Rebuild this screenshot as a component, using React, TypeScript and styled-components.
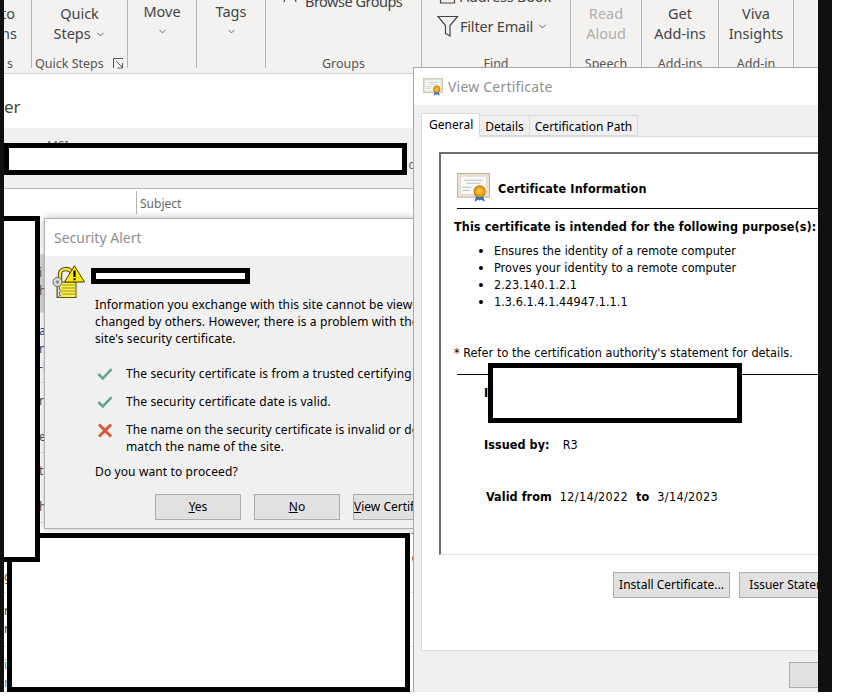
import styled, { createGlobalStyle } from "styled-components";
import { ChevronDown } from "lucide-react";

const GlobalStyle = createGlobalStyle`
  html, body {
    margin: 0;
    padding: 0;
    background: #ffffff;
  }
  * { box-sizing: border-box; }
`;

const UI_FONT = `"Noto Sans", "Open Sans", sans-serif`;
const CERT_FONT = `"DejaVu Sans Condensed", "DejaVu Sans", sans-serif`;

const ribbonGroups = [
  { width: 28, label: "s", labelAlign: "left" },
  { width: 96, label: "Quick Steps", labelAlign: "left" },
  { width: 69, label: "" },
  { width: 69, label: "" },
  { width: 156, label: "Groups" },
  { width: 149, label: "Find" },
  { width: 71, label: "Speech" },
  { width: 77, label: "Add-ins" },
  { width: 75, label: "Add-in" },
];

const listRows = [
  { height: 39, text: "" },
  { height: 58, text: "i\nh", shade: true, indent: 39 },
  { height: 70, text: "ai\nng\n-F", color: "#2b4f8f", indent: 39 },
  { height: 70, text: "r\n\ne", indent: 39 },
  { height: 70, text: "t\n\nh", indent: 39 },
  { height: 70, text: "\n\ng", side: "T\ne", indent: 4, color: "#8a3a3a" },
  { height: 54, text: "r\nr", indent: 4, color: "#7a2a4a" },
  { height: 45, text: "i\nr", indent: 4, color: "#1a9ac0" },
];

export default function App() {
  return (
    <>
      <GlobalStyle />
      <Desktop>
        <Ribbon>
          {ribbonGroups.map((group, i) => (
            <RibbonGroup key={i} $width={group.width}>
              <RibbonContent>
                {i === 0 && (
                  <CutButton>
                    to
                    <br />
                    ns
                  </CutButton>
                )}
                {i === 1 && (
                  <LargeButton>
                    Quick
                    <br />
                    Steps <SmallChevron size={11} />
                  </LargeButton>
                )}
                {i === 2 && (
                  <StackedButton>
                    Move
                    <ChevronDown size={11} strokeWidth={1.6} />
                  </StackedButton>
                )}
                {i === 3 && (
                  <StackedButton>
                    Tags
                    <ChevronDown size={11} strokeWidth={1.6} />
                  </StackedButton>
                )}
                {i === 4 && (
                  <BrowseRow>
                    <PersonIcon />
                    Browse Groups
                  </BrowseRow>
                )}
                {i === 5 && (
                  <FindColumn>
                    <FindRow>
                      <BookIcon />
                      Address Book
                    </FindRow>
                    <FindRow>
                      <FilterIcon />
                      Filter Email <FindChevron size={11} />
                    </FindRow>
                  </FindColumn>
                )}
                {i === 6 && (
                  <LargeButton $muted>
                    Read
                    <br />
                    Aloud
                  </LargeButton>
                )}
                {i === 7 && (
                  <LargeButton>
                    Get
                    <br />
                    Add-ins
                  </LargeButton>
                )}
                {i === 8 && (
                  <LargeButton>
                    Viva
                    <br />
                    Insights
                  </LargeButton>
                )}
              </RibbonContent>
              <GroupLabel $align={group.labelAlign}>
                {group.label}
                {i === 1 && <LauncherIcon />}
              </GroupLabel>
            </RibbonGroup>
          ))}
        </Ribbon>

        <FolderTitle>er</FolderTitle>
        <FilterBand>
          <BandSender>MSI</BandSender>
          <BandEnd>ci</BandEnd>
        </FilterBand>
        <ColumnHeader>
          <SubjectCell>Subject</SubjectCell>
        </ColumnHeader>
        <MailList>
          {listRows.map((row, i) => (
            <MailRow key={i} $height={row.height} $shade={row.shade} $color={row.color} $indent={row.indent ?? 39}>
              <span>{row.text}</span>
              {row.side && <RowSide>{row.side}</RowSide>}
            </MailRow>
          ))}
        </MailList>

        <SecurityWindow>
          <WindowTitle>Security Alert</WindowTitle>
          <AlertBody>
            <AlertHead>
              <LockWarningIcon />
              <InlineRedaction />
            </AlertHead>
            <AlertText>
              Information you exchange with this site cannot be viewed or
              <br />
              changed by others. However, there is a problem with the
              <br />
              site's security certificate.
            </AlertText>
            <CheckList>
              <CheckItem>
                <CheckIcon />
                <span>The security certificate is from a trusted certifying authority.</span>
              </CheckItem>
              <CheckItem>
                <CheckIcon />
                <span>The security certificate date is valid.</span>
              </CheckItem>
              <CheckItem>
                <CrossIcon />
                <span>
                  The name on the security certificate is invalid or does not
                  <br />
                  match the name of the site.
                </span>
              </CheckItem>
            </CheckList>
            <Question>Do you want to proceed?</Question>
            <AlertButtons>
              <DialogButton $width={86}>
                <u>Y</u>es
              </DialogButton>
              <DialogButton $width={86}>
                <u>N</u>o
              </DialogButton>
              <DialogButton $width={86}>
                <u>V</u>iew Certificate
              </DialogButton>
            </AlertButtons>
          </AlertBody>
        </SecurityWindow>

        <CertWindow>
          <CertTitle>
            <CertIcon $size={20} />
            View Certificate
          </CertTitle>
          <CertBody>
            <Tabs>
              <Tab $active>General</Tab>
              <Tab>Details</Tab>
              <Tab>Certification Path</Tab>
            </Tabs>
            <TabPanel>
              <InfoBox>
                <InfoHead>
                  <CertIcon $size={33} />
                  <InfoHeading>Certificate Information</InfoHeading>
                </InfoHead>
                <PurposeHeading>This certificate is intended for the following purpose(s):</PurposeHeading>
                <Purposes>
                  <li>Ensures the identity of a remote computer</li>
                  <li>Proves your identity to a remote computer</li>
                  <li>2.23.140.1.2.1</li>
                  <li>1.3.6.1.4.1.44947.1.1.1</li>
                </Purposes>
                <ReferNote>* Refer to the certification authority's statement for details.</ReferNote>
                <InfoRule />
                <IssuedTo>Issued to:</IssuedTo>
                <IssuedBy>
                  <b>Issued by:</b>
                  <span>R3</span>
                </IssuedBy>
                <ValidRow>
                  <b>Valid from</b>
                  <span>12/14/2022</span>
                  <b>to</b>
                  <span>3/14/2023</span>
                </ValidRow>
              </InfoBox>
              <PanelButtons>
                <DialogButton $width={117}>Install Certificate...</DialogButton>
                <DialogButton $width={117}>Issuer Statement</DialogButton>
              </PanelButtons>
            </TabPanel>
            <CertFooter>
              <DialogButton $width={86} />
            </CertFooter>
          </CertBody>
        </CertWindow>

        <Redaction $x={4} $y={143} $w={403} $h={32} />
        <Redaction $x={7} $y={533} $w={403} $h={159} />
        <Redaction $x={-5} $y={216} $w={45} $h={346} />
        <Redaction $x={488} $y={363} $w={254} $h={60} />
        <EdgeBar $x={0} $w={4} />
        <EdgeBar $x={818} $w={14} />
      </Desktop>
    </>
  );
}

function PersonIcon() {
  return (
    <svg width="14" height="16" viewBox="0 0 14 16" fill="none" stroke="#444" strokeWidth="1.2">
      <circle cx="7" cy="2" r="4" />
      <path d="M1 11c.6-3.4 2.6-5 6-5s5.400 1.600 6 5" />
    </svg>
  );
}

function BookIcon() {
  return (
    <BookSvg width="17" height="18" viewBox="0 0 17 18" fill="none" stroke="#444" strokeWidth="1.2">
      <path d="M1.500 1h14v15h-14z" />
      <path d="M1.500 12.500h14M1.500 9.500h14" />
    </BookSvg>
  );
}

function FilterIcon() {
  return (
    <svg width="22" height="22" viewBox="0 0 22 22" fill="none" stroke="#444" strokeWidth="1.2">
      <path d="M1 1.500h19.500l-7.500 9v10.500l-4.500-2.500v-8z" />
    </svg>
  );
}

function LauncherIcon() {
  return (
    <LauncherSvg width="11" height="11" viewBox="0 0 11 11" fill="none" stroke="#555" strokeWidth="1">
      <path d="M.5 10V.5H10M3 3l6 6M9.500 5v5h-5" />
    </LauncherSvg>
  );
}

function LockWarningIcon() {
  return (
    <svg width="34" height="34" viewBox="0 0 34 34">
      <path d="M8 18V9c0-6 11-7 12 0v9" fill="none" stroke="#5f5500" strokeWidth="4.500" />
      <path d="M8 18V9c0-6 11-7 12 0v9" fill="none" stroke="#f6e64a" strokeWidth="2.200" />
      <rect x="5" y="17" width="19" height="15.500" fill="#f9ec5a" stroke="#5c5200" />
      <path d="M10 20h13M10 23h13M10 26h13M10 29h13" stroke="#a89600" strokeWidth="1" />
      <path d="M22.500 0.800 32.500 17H12.500z" fill="#ffec00" stroke="#3f3a00" strokeLinejoin="round" />
      <path d="M22.500 5.500v6.500M22.500 13.300v2" stroke="#000" strokeWidth="2.200" />
      <path d="M6.500 20v10.500l2 1.500M6.500 26h3" fill="none" stroke="#666" strokeWidth="3" />
      <path d="M6.500 20v10.500l2 1.500M6.500 26h3" fill="none" stroke="#d8d8d8" strokeWidth="1.400" />
      <circle cx="5.500" cy="17" r="4.500" fill="#dcdcdc" stroke="#666" />
      <circle cx="5.500" cy="17" r="1.400" fill="#777" />
    </svg>
  );
}

function CheckIcon() {
  return (
    <MarkSvg width="16" height="14" viewBox="0 0 18 14" fill="none" stroke="#5fa58f" strokeWidth="2.800">
      <path d="M1.500 7l5 5L16.500 1.500" />
    </MarkSvg>
  );
}

function CrossIcon() {
  return (
    <MarkSvg width="16" height="15" viewBox="0 0 16 15" fill="none" stroke="#d9583b" strokeWidth="3">
      <path d="M2 1.500l12 12M14 1.500l-12 12" />
    </MarkSvg>
  );
}

function CertIcon({ $size }: { $size: number }) {
  return (
    <svg width={$size} height={$size * 0.9} viewBox="0 0 32 29">
      <rect x="0.500" y="0.500" width="31" height="23" fill="#efe9dc" stroke="#b9ae99" />
      <rect x="3" y="3" width="26" height="18" fill="#fbfaf6" stroke="#d9d2c2" />
      <path d="M7 7h18M9 10h14M5 14h9M5 17h7" stroke="#b8c0cc" />
      <path d="M19 21l-2 7 4-2 1 1V21zM25 21l2 7-4-2-1 1V21z" fill="#2a6fd0" />
      <circle cx="22" cy="18" r="5.500" fill="#e8a317" stroke="#b97c0c" />
      <circle cx="22" cy="18" r="2.500" fill="#f4c24d" />
    </svg>
  );
}

const Desktop = styled.div`
  position: relative;
  width: 851px;
  height: 692px;
  overflow: hidden;
  background: #ffffff;
  font-family: ${UI_FONT};
  color: #000000;
`;

const Ribbon = styled.div`
  display: flex;
  height: 74px;
  padding: 0 0 5px 4px;
  width: 818px;
  background: #f3f2f1;
  border-bottom: 1px solid #d2d0ce;
`;

const RibbonGroup = styled.div<{ $width: number }>`
  display: flex;
  flex-direction: column;
  width: ${(p) => p.$width}px;
  flex: none;
  border-right: 1px solid #b8b6b4;
`;

const RibbonContent = styled.div`
  flex: 1;
  min-height: 0;
  display: flex;
  justify-content: center;
  font-size: 14.500px;
  line-height: 20px;
  color: #444444;
`;

const LargeButton = styled.div<{ $muted?: boolean }>`
  padding-top: 3px;
  text-align: center;
  white-space: nowrap;
  color: ${(p) => (p.$muted ? "#b0aeac" : "#444444")};
`;

const CutButton = styled.div`
  width: 100%;
  padding-top: 3px;
  margin-left: -6px;
  white-space: nowrap;
`;

const StackedButton = styled.div`
  display: flex;
  flex-direction: column;
  align-items: center;
  gap: 5px;
  padding-top: 1px;
`;

const SmallChevron = styled(ChevronDown)`
  vertical-align: -1px;
  stroke-width: 1.800;
`;

const FindChevron = styled(SmallChevron)`
  margin-left: 3px;
`;

const BrowseRow = styled.div`
  display: flex;
  gap: 8px;
  height: 12px;
  margin-top: -9px;
  width: 100%;
  padding-left: 17px;
  letter-spacing: -0.5px;
  white-space: nowrap;
`;

const FindColumn = styled.div`
  width: 100%;
  padding-left: 15px;
  margin-top: -15px;
  display: flex;
  flex-direction: column;
  gap: 8px;
`;

const FindRow = styled.div`
  display: flex;
  align-items: center;
  gap: 1px;
  height: 22px;
  letter-spacing: -0.2px;
  white-space: nowrap;
`;

const BookSvg = styled.svg`
  margin: 0 3px 0 2px;
`;

const GroupLabel = styled.div<{ $align?: string }>`
  height: 17px;
  margin-bottom: -4px;
  padding: 0 3px;
  font-size: 12.500px;
  line-height: 17px;
  color: #555555;
  white-space: nowrap;
  text-align: ${(p) => p.$align ?? "center"};
`;

const LauncherSvg = styled.svg`
  margin-left: 9px;
  vertical-align: -1px;
`;

const FolderTitle = styled.div`
  height: 54px;
  padding: 22px 0 0 4px;
  font-size: 17px;
  line-height: 22px;
  color: #444444;
  width: 414px;
`;

const FilterBand = styled.div`
  height: 61px;
  width: 818px;
  padding: 9px 0 0 47px;
  display: flex;
  background: #f0f0f0;
  border-bottom: 1px solid #b5b9c4;
  font-size: 12px;
  color: #666666;
`;

const BandSender = styled.span`
  line-height: 17px;
`;

const BandEnd = styled.span`
  margin-left: 340px;
  line-height: 56px;
`;

const ColumnHeader = styled.div`
  height: 27px;
  width: 818px;
  display: flex;
  padding-left: 136px;
  box-shadow: 0 3px 4px rgba(0, 0, 0, 0.08);
`;

const SubjectCell = styled.div`
  border-left: 1px solid #b0b0b0;
  margin: 2px 0;
  padding-left: 3px;
  font-size: 12px;
  line-height: 25px;
  color: #666666;
`;

const MailList = styled.div`
  display: flex;
  flex-direction: column;
  width: 818px;
`;

const MailRow = styled.div<{ $height: number; $shade?: boolean; $color?: string; $indent: number }>`
  height: ${(p) => p.$height}px;
  padding: 9px 0 0 ${(p) => p.$indent}px;
  display: flex;
  white-space: pre;
  font-size: 12px;
  line-height: 18px;
  color: ${(p) => p.$color ?? "#555555"};
  background: ${(p) => (p.$shade ? "#d8d8d8" : "#ffffff")};
  border-bottom: 1px solid #e6e6e6;
`;

const RowSide = styled.span`
  margin: -4px 0 0 400px;
  line-height: 20px;
`;

const SecurityWindow = styled.div`
  position: absolute;
  left: 44px;
  top: 218px;
  width: 371px;
  height: 311px;
  overflow: hidden;
  display: flex;
  flex-direction: column;
  background: #ffffff;
  border: 1px solid #b0b0b0;
  box-shadow: 0 0 8px rgba(0, 0, 0, 0.25);
`;

const WindowTitle = styled.div`
  height: 37px;
  flex: none;
  padding-left: 9px;
  font-size: 14px;
  line-height: 37px;
  color: #8f8f8f;
`;

const AlertBody = styled.div`
  flex: 1;
  background: #f0f0f0;
  padding: 9px 0 0 7px;
  font-size: 12px;
  line-height: 17px;
  letter-spacing: 0.12px;
  white-space: nowrap;
`;

const AlertHead = styled.div`
  display: flex;
  align-items: flex-start;
  gap: 5px;
  height: 31px;
`;

const InlineRedaction = styled.div`
  width: 159px;
  height: 16px;
  margin-top: 3px;
  background: #ffffff;
  border: 5px solid #000000;
`;

const AlertText = styled.div`
  padding-left: 43px;
`;

const CheckList = styled.div`
  display: flex;
  flex-direction: column;
  gap: 11px;
  margin-top: 18px;
  padding-left: 45px;
`;

const CheckItem = styled.div`
  display: flex;
  gap: 13px;
`;

const MarkSvg = styled.svg`
  flex: none;
  margin-top: 2px;
`;

const Question = styled.div`
  margin-top: 8px;
  padding-left: 43px;
`;

const AlertButtons = styled.div`
  display: flex;
  gap: 13px;
  margin-top: 14px;
  padding-left: 103px;
`;

const DialogButton = styled.div<{ $width: number }>`
  flex: none;
  width: ${(p) => p.$width}px;
  height: 26px;
  background: #e1e1e1;
  border: 1px solid #adadad;
  font-family: ${UI_FONT};
  font-size: 12px;
  line-height: 24px;
  letter-spacing: 0;
  text-align: center;
  white-space: nowrap;
  overflow: hidden;
`;

const CertWindow = styled.div`
  position: absolute;
  left: 413px;
  top: 67px;
  width: 405px;
  height: 625px;
  overflow: hidden;
  display: flex;
  flex-direction: column;
  background: #ffffff;
  border-left: 1px solid #a8a8a8;
  border-top: 1px solid #a8a8a8;
`;

const CertTitle = styled.div`
  height: 37px;
  flex: none;
  display: flex;
  align-items: center;
  gap: 5px;
  padding-left: 9px;
  font-size: 14px;
  letter-spacing: 0.2px;
  color: #8f8f8f;
`;

const CertBody = styled.div`
  flex: 1;
  display: flex;
  flex-direction: column;
  padding: 8px 0 0 7px;
  background: #f0f0f0;
`;

const Tabs = styled.div`
  display: flex;
  align-items: flex-end;
  height: 23px;
  flex: none;
`;

const Tab = styled.div<{ $active?: boolean }>`
  height: ${(p) => (p.$active ? 24 : 21)}px;
  margin-bottom: ${(p) => (p.$active ? -1 : 0)}px;
  padding: 0 ${(p) => (p.$active ? "6px 0 7px" : "5px")};
  position: relative;
  background: ${(p) => (p.$active ? "#ffffff" : "#f0f0f0")};
  border: 1px solid #d9d9d9;
  border-bottom: ${(p) => (p.$active ? "none" : "1px solid #d9d9d9")};
  border-left: ${(p) => (p.$active ? "1px solid #d9d9d9" : "none")};
  font-size: 12px;
  line-height: ${(p) => (p.$active ? 21 : 22)}px;
  white-space: nowrap;
`;

const TabPanel = styled.div`
  height: 515px;
  flex: none;
  padding: 15px 0 0 17px;
  background: #ffffff;
  border: 1px solid #d9d9d9;
  border-right: none;
`;

const InfoBox = styled.div`
  height: 403px;
  padding: 20px 0 0 16px;
  border-top: 2px solid #6d6d6d;
  border-left: 2px solid #6d6d6d;
  border-bottom: 1px solid #e0e0e0;
  font-family: ${CERT_FONT};
  font-size: 12.500px;
  letter-spacing: 0.06px;
  line-height: 17px;
  white-space: nowrap;
`;

const InfoHead = styled.div`
  display: flex;
  align-items: center;
  gap: 8px;
  height: 35px;
  border-bottom: 1px solid #000000;
  padding-bottom: 6px;
`;

const InfoHeading = styled.div`
  font-weight: 700;
  letter-spacing: 0.15px;
`;

const PurposeHeading = styled.div`
  margin: 9px 0 0 -3px;
  font-weight: 700;
  letter-spacing: 0.1px;
`;

const Purposes = styled.ul`
  margin: 7px 0 0;
  padding: 0 0 0 37px;
  li {
    line-height: 17px;
  }
`;

const ReferNote = styled.div`
  margin: 34px 0 0 -3px;
`;

const InfoRule = styled.div`
  height: 1px;
  margin-top: 13px;
  background: #000000;
`;

const IssuedTo = styled.div`
  margin: 9px 0 0 27px;
  font-weight: 700;
`;

const IssuedBy = styled.div`
  display: flex;
  gap: 13px;
  margin: 35px 0 0 27px;
`;

const ValidRow = styled.div`
  display: flex;
  gap: 8px;
  margin: 35px 0 0 29px;

  span {
    letter-spacing: 0.35px;
  }
`;

const PanelButtons = styled.div`
  display: flex;
  gap: 9px;
  margin-top: 17px;
  padding-left: 174px;
`;

const CertFooter = styled.div`
  padding: 11px 0 0 368px;
`;

const Redaction = styled.div<{ $x: number; $y: number; $w: number; $h: number }>`
  position: absolute;
  left: ${(p) => p.$x}px;
  top: ${(p) => p.$y}px;
  width: ${(p) => p.$w}px;
  height: ${(p) => p.$h}px;
  background: #ffffff;
  border: 5px solid #000000;
`;

const EdgeBar = styled.div<{ $x: number; $w: number }>`
  position: absolute;
  left: ${(p) => p.$x}px;
  top: 0;
  width: ${(p) => p.$w}px;
  height: 692px;
  background: #101010;
`;
